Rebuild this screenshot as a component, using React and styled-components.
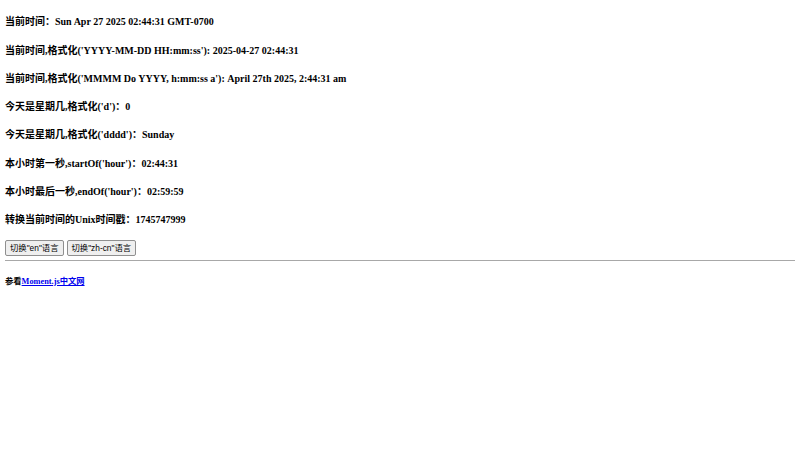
import React from 'react';
import styled, { createGlobalStyle } from 'styled-components';

const Global = createGlobalStyle`
  html, body { margin: 0; padding: 0; background: #fff; }
  body { font-family: "Liberation Serif", "Noto Sans CJK SC", serif; color: #000; }
`;

const Page = styled.div`
  padding: 1px 5px 0;
`;

const Line = styled.h4`
  margin: 13.3px 0;
  font-size: 10px;
  line-height: 15px;
  font-weight: bold;
  &:last-of-type { margin-bottom: 12.3px; }
`;

const Buttons = styled.div`
  display: flex;
  gap: 3px;
`;

const LangButton = styled.button`
  font-family: "Liberation Sans", "Noto Sans CJK SC", sans-serif;
  font-size: 8.33px;
  line-height: 12px;
  height: 16px;
  padding: 1px 4px;
  margin: 0;
  color: #000;
  background: #efefef;
  border: 1px solid #8f8f8f;
  border-radius: 2px;
`;

const Rule = styled.hr`
  margin: 4px 0 5px;
  height: 0;
  border: 0;
  border-top: 1px solid #a8a8a8;
`;

const Footer = styled.h5`
  margin: 15px 0;
  font-size: 8.3px;
  line-height: 12px;
  font-weight: bold;
`;

const Link = styled.a`
  color: #0000ee;
  text-decoration: underline;
`;

const lines = [
  '当前时间：Sun Apr 27 2025 02:44:31 GMT-0700',
  "当前时间,格式化('YYYY-MM-DD HH:mm:ss'): 2025-04-27 02:44:31",
  "当前时间,格式化('MMMM Do YYYY, h:mm:ss a'): April 27th 2025, 2:44:31 am",
  "今天是星期几,格式化('d')：0",
  "今天是星期几,格式化('dddd')：Sunday",
  "本小时第一秒,startOf('hour')：02:44:31",
  "本小时最后一秒,endOf('hour')：02:59:59",
  '转换当前时间的Unix时间戳：1745747999',
];

export default function App() {
  return (
    <Page>
      <Global />
      {lines.map((t, i) => (
        <Line key={i}>{t}</Line>
      ))}
      <Buttons>
        <LangButton>切换"en"语言</LangButton>
        <LangButton>切换"zh-cn"语言</LangButton>
      </Buttons>
      <Rule />
      <Footer>
        参看<Link href="#">Moment.js中文网</Link>
      </Footer>
    </Page>
  );
}
